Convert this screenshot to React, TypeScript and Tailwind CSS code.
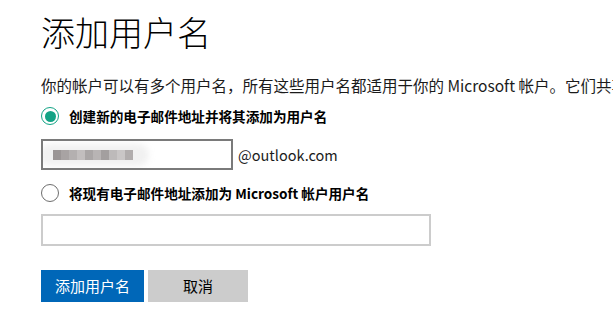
import React, { useState } from 'react';

const font = {
  fontFamily: '"Segoe UI", "Noto Sans CJK SC", "Noto Sans", sans-serif',
};

// mosaic blocks standing in for the blurred username
const blur = ['#9b9696', '#a8a3a3', '#b4b0b0', '#c2bebe', '#aaa6a6', '#b8b4b4', '#a39f9f', '#bdbaba', '#c9c6c6', '#b1adad'];

const Radio = ({ checked, onClick }: { checked: boolean; onClick: () => void }) => (
  <span
    onClick={onClick}
    className={`flex h-[18px] w-[18px] shrink-0 cursor-pointer items-center justify-center rounded-full border-[1.5px] ${
      checked ? 'border-[#12a385]' : 'border-[#6e6e6e]'
    }`}
  >
    {checked && <span className="h-[11px] w-[11px] rounded-full bg-[#12a385]" />}
  </span>
);

const App = () => {
  const [mode, setMode] = useState<'new' | 'existing'>('new');

  return (
    <div className="h-[329px] w-[613px] overflow-hidden bg-white text-black" style={font}>
      <div className="flex flex-col pl-[41px] pt-[11px]">
        <h1 className="text-[34px] font-light leading-[42px]">添加用户名</h1>

        <p className="mt-[22px] w-[572px] overflow-hidden whitespace-nowrap text-[15.5px] leading-[20px] text-[#1b1b1b]">
          你的帐户可以有多个用户名，所有这些用户名都适用于你的 Microsoft 帐户。它们共享相同的密码、联系人和帐户设置。
        </p>

        <label className="mt-[12px] flex items-center gap-[10px]">
          <Radio checked={mode === 'new'} onClick={() => setMode('new')} />
          <span className="text-[13.6px] font-bold leading-[18px]">创建新的电子邮件地址并将其添加为用户名</span>
        </label>

        <div className="mt-[14px] flex items-center gap-[5px]">
          <div className="relative flex h-[31px] w-[192px] items-center overflow-hidden border-2 border-[#7a7a7a] bg-white">
            <div className="absolute left-[-4px] top-[3px] h-[22px] w-[110px] rounded-full bg-[#f1f1f1] blur-[3px]" />
            <div className="relative ml-[10px] flex h-[10px] blur-[0.6px]">
              {blur.map((c, i) => (
                <span key={i} className="h-[10px] w-[8px]" style={{ backgroundColor: c }} />
              ))}
            </div>
          </div>
          <span className="text-[14.5px] leading-[20px] text-[#1b1b1b]">@outlook.com</span>
        </div>

        <label className="mt-[14px] flex items-center gap-[10px]">
          <Radio checked={mode === 'existing'} onClick={() => setMode('existing')} />
          <span className="text-[13.6px] font-bold leading-[18px]">将现有电子邮件地址添加为 Microsoft 帐户用户名</span>
        </label>

        <input className="mt-[12px] h-[32px] w-[390px] border-2 border-[#cccccc] bg-white px-2 outline-none" />

        <div className="mt-[24px] flex gap-[4px]">
          <button className="h-[32px] w-[103px] bg-[#0067b8] text-[15px] text-white">添加用户名</button>
          <button className="h-[32px] w-[100px] bg-[#cccccc] text-[15px] text-black">取消</button>
        </div>
      </div>
    </div>
  );
};

export default App;
